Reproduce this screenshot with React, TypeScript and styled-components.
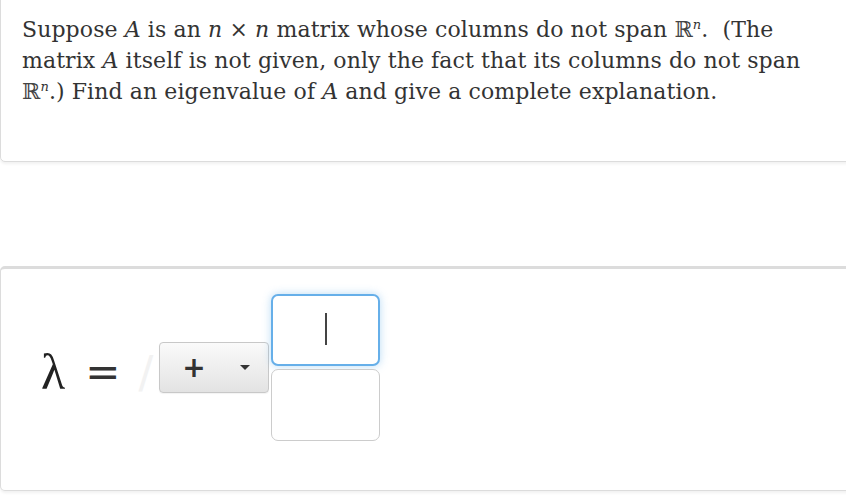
import styled, { createGlobalStyle } from 'styled-components'

const GlobalStyle = createGlobalStyle`
  html, body {
    margin: 0;
    padding: 0;
    background: #ffffff;
    overflow: hidden;
  }
  body {
    font-family: 'DejaVu Serif', 'Liberation Serif', serif;
    color: #333;
  }
`

const Page = styled.div`
  display: flex;
  flex-direction: column;
  width: 860px;
  height: 500px;
`

const Card = styled.div<{ $thickTop?: boolean }>`
  border: 1px solid #dcdcdc;
  border-top-width: ${(p) => (p.$thickTop ? '3px' : '1px')};
  border-radius: 5px;
  box-shadow: 0 2px 3px rgba(0, 0, 0, 0.06);
  background: #fff;
`

const QuestionCard = styled(Card)`
  margin-top: -12px;
  height: 174px;
  box-sizing: border-box;
  padding: 25px 0 0 21px;
`

const Question = styled.p`
  margin: 0;
  font-family: 'DejaVu Serif', serif;
  font-size: 22px;
  letter-spacing: 0.1px;
  line-height: 31px;
  color: #333;
  white-space: nowrap;
`

const Math = styled.i`
  font-style: italic;
`

const Reals = styled.span`
  font-family: 'DejaVu Serif', serif;
  color: #444;
`

const Sup = styled.sup`
  font-size: 13px;
  line-height: 0;
  font-style: italic;
`

const AnswerCard = styled(Card)`
  margin-top: 104px;
  height: 225px;
  box-sizing: border-box;
  display: flex;
  align-items: center;
  padding: 0 0 24px 40px;
`

const Lambda = styled.span`
  font-family: 'Liberation Serif', serif;
  font-size: 50px;
  color: #222;
  margin-top: 8px;
`

const Equals = styled.span`
  font-family: 'DejaVu Sans', sans-serif;
  font-size: 42px;
  color: #333;
  margin: 8px 0 0 20px;
`

const Slash = styled.span`
  font-family: 'DejaVu Sans', sans-serif;
  font-size: 44px;
  color: #f2f2f2;
  margin: 10px 0 0 18px;
`

const SignButton = styled.div`
  display: flex;
  align-items: center;
  gap: 34px;
  flex: none;
  width: 110px;
  height: 51px;
  box-sizing: border-box;
  margin: 0 0 0 6px;
  padding: 0 0 0 22px;
  border: 1px solid #c8c8c8;
  border-radius: 4px;
  background: linear-gradient(#fafafa, #e3e3e3);
  box-shadow: 0 1px 1px rgba(0, 0, 0, 0.05);
  font-family: 'DejaVu Sans', sans-serif;
  font-size: 28px;
  font-weight: bold;
  line-height: 1;
  color: #333;
`

const Caret = styled.span`
  width: 0;
  height: 0;
  border-left: 5px solid transparent;
  border-right: 5px solid transparent;
  border-top: 5px solid #333;
`

const Fraction = styled.div`
  display: flex;
  flex-direction: column;
  gap: 3px;
  margin: 0 0 0 2px;
`

const Box = styled.div<{ $focused?: boolean }>`
  width: 109px;
  height: 72px;
  box-sizing: border-box;
  display: flex;
  align-items: center;
  justify-content: center;
  border-style: solid;
  border-color: ${(p) => (p.$focused ? '#66afe9' : '#cccccc')};
  border-width: ${(p) => (p.$focused ? '2px' : '1px')};
  border-radius: 7px;
  background: #fff;
  box-shadow: ${(p) =>
    p.$focused ? '0 0 8px rgba(102, 175, 233, 0.45)' : 'none'};
`

const Cursor = styled.span`
  width: 2px;
  height: 32px;
  background: #444;
  margin-top: -2px;
`

export default function App() {
  return (
    <>
      <GlobalStyle />
      <Page>
        <QuestionCard>
          <Question>
            Suppose <Math>A</Math> is an <Math>n</Math> × <Math>n</Math> matrix
            whose columns do not span <Reals>ℝ</Reals>
            <Sup>n</Sup>. &nbsp;(The
            <br />
            matrix <Math>A</Math> itself is not given, only the fact that its
            columns do not span
            <br />
            <Reals>ℝ</Reals>
            <Sup>n</Sup>.) Find an eigenvalue of <Math>A</Math> and give a
            complete explanation.
          </Question>
        </QuestionCard>
        <AnswerCard $thickTop>
          <Lambda>λ</Lambda>
          <Equals>=</Equals>
          <Slash>/</Slash>
          <SignButton>
            +
            <Caret />
          </SignButton>
          <Fraction>
            <Box $focused>
              <Cursor />
            </Box>
            <Box />
          </Fraction>
        </AnswerCard>
      </Page>
    </>
  )
}
